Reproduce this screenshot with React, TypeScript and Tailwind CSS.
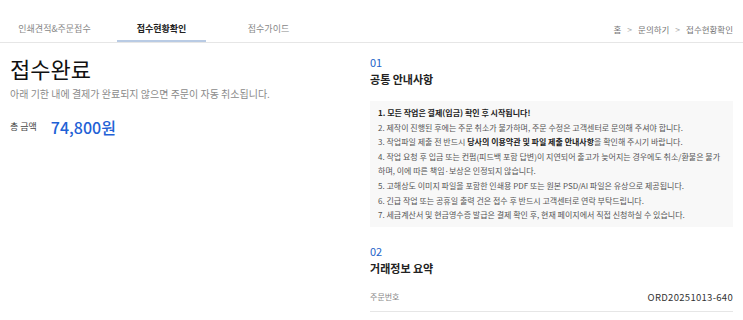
import React from "react";

const tabs = ["인쇄견적&주문접수", "접수현황확인", "접수가이드"];

export default function App() {
  return (
    <div className="w-[743px] h-[320px] overflow-hidden bg-white text-[#222]" style={{ fontFamily: '"Noto Sans CJK KR", "Noto Sans", sans-serif' }}>
      {/* Top nav */}
      <div className="flex items-end justify-between border-b border-[#e6e6e6] h-[43px] px-[10px]">
        <div className="flex gap-[18px]">
          {tabs.map((t, i) => (
            <div
              key={t}
              className={`w-[89px] text-center text-[9px] pb-[5px] ${i === 1 ? "font-bold text-[#222] border-b-2 border-[#b9cbe4]" : "text-[#888] border-b-2 border-transparent"}`}
            >
              {t}
            </div>
          ))}
        </div>
        <div className="flex items-center gap-[6px] text-[8.5px] text-[#777] pb-[6px]">
          <span>홈</span>
          <span className="text-[#aaa]">&gt;</span>
          <span>문의하기</span>
          <span className="text-[#aaa]">&gt;</span>
          <span>접수현황확인</span>
        </div>
      </div>

      <div className="flex px-[10px]">
        {/* Left */}
        <div className="w-[362px] pt-[10px]">
          <h1 className="text-[22px] leading-[30px] font-normal text-[#111]">접수완료</h1>
          <p className="mt-[3px] text-[10px] text-[#8a8a8a]">아래 기한 내에 결제가 완료되지 않으면 주문이 자동 취소됩니다.</p>
          <div className="flex items-center gap-[14px] mt-[14px]">
            <span className="text-[9px] text-[#444]">총 금액</span>
            <span className="text-[16px] font-medium text-[#1f62d6]">74,800원</span>
          </div>
        </div>

        {/* Right */}
        <div className="w-[365px] pt-[11px]">
          <div className="text-[11px] text-[#2463c9] leading-[16px]">01</div>
          <div className="text-[11px] font-semibold leading-[16px] mt-[1px]">공통 안내사항</div>
          <div className="mt-[14px] bg-[#f8f8f8] px-[8px] pt-[5px] pb-[4px] text-[8px] leading-[14.6px] text-[#555]">
            <p className="font-bold text-[#222]">1. 모든 작업은 결제(입금) 확인 후 시작됩니다!</p>
            <p>2. 제작이 진행된 후에는 주문 취소가 불가하며, 주문 수정은 고객센터로 문의해 주셔야 합니다.</p>
            <p>
              3. 작업파일 제출 전 반드시 <b className="text-[#222]">당사의 이용약관 및 파일 제출 안내사항</b>을 확인해 주시기 바랍니다.
            </p>
            <p>4. 작업 요청 후 입금 또는 컨펌(피드백 포함 답변)이 지연되어 출고가 늦어지는 경우에도 취소/환불은 불가하며, 이에 따른 책임·보상은 인정되지 않습니다.</p>
            <p>5. 고해상도 이미지 파일을 포함한 인쇄용 PDF 또는 원본 PSD/AI 파일은 유상으로 제공됩니다.</p>
            <p>6. 긴급 작업 또는 공휴일 출력 건은 접수 후 반드시 고객센터로 연락 부탁드립니다.</p>
            <p>7. 세금계산서 및 현금영수증 발급은 결제 확인 후, 현재 페이지에서 직접 신청하실 수 있습니다.</p>
          </div>

          <div className="mt-[16px] text-[11px] text-[#2463c9] leading-[16px]">02</div>
          <div className="text-[11px] font-semibold leading-[16px] mt-[1px]">거래정보 요약</div>
          <div className="mt-[14px] flex items-center justify-between border-b border-[#e6e6e6] pb-[7px]">
            <span className="text-[8px] text-[#888]">주문번호</span>
            <span className="text-[9.5px] text-[#333] tracking-[0.3px]">ORD20251013-640</span>
          </div>
        </div>
      </div>
    </div>
  );
}
